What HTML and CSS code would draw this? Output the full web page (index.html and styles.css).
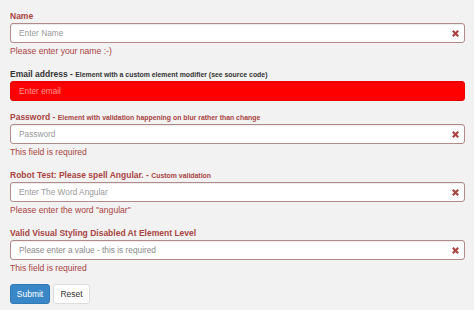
FILE: index.html
```html
<!DOCTYPE html>
<html lang="en">
<head>
  <meta charset="UTF-8">
  <title>Validation Form</title>
  <link rel="stylesheet" href="styles.css">
</head>
<body>
  <form class="form" novalidate>
    <!-- Name -->
    <div class="form-group has-error">
      <label class="control-label" for="name">Name</label>
      <div class="field">
        <input type="text" id="name" class="form-control" placeholder="Enter Name">
        <svg class="feedback" viewBox="0 0 10 10"><path d="M2 2 L8 8 M8 2 L2 8"/></svg>
      </div>
      <p class="help-block">Please enter your name :-)</p>
    </div>

    <!-- Email -->
    <div class="form-group">
      <label class="control-label dark" for="email">Email address - <small>Element with a custom element modifier (see source code)</small></label>
      <div class="field">
        <input type="email" id="email" class="form-control red" placeholder="Enter email">
      </div>
    </div>

    <!-- Password -->
    <div class="form-group has-error">
      <label class="control-label" for="password">Password - <small>Element with validation happening on blur rather than change</small></label>
      <div class="field">
        <input type="password" id="password" class="form-control" placeholder="Password">
        <svg class="feedback" viewBox="0 0 10 10"><path d="M2 2 L8 8 M8 2 L2 8"/></svg>
      </div>
      <p class="help-block">This field is required</p>
    </div>

    <!-- Robot -->
    <div class="form-group has-error">
      <label class="control-label" for="robot">Robot Test: Please spell Angular. - <small>Custom validation</small></label>
      <div class="field">
        <input type="text" id="robot" class="form-control" placeholder="Enter The Word Angular">
        <svg class="feedback" viewBox="0 0 10 10"><path d="M2 2 L8 8 M8 2 L2 8"/></svg>
      </div>
      <p class="help-block">Please enter the word "angular"</p>
    </div>

    <!-- No visual styling -->
    <div class="form-group has-error">
      <label class="control-label" for="novisual">Valid Visual Styling Disabled At Element Level</label>
      <div class="field">
        <input type="text" id="novisual" class="form-control plain" placeholder="Please enter a value - this is required">
        <svg class="feedback" viewBox="0 0 10 10"><path d="M2 2 L8 8 M8 2 L2 8"/></svg>
      </div>
      <p class="help-block">This field is required</p>
    </div>

    <div class="buttons">
      <button type="submit" class="btn btn-primary">Submit</button>
      <button type="reset" class="btn btn-default">Reset</button>
    </div>
  </form>
</body>
</html>
```

FILE: styles.css
```css
body {
  margin: 0;
  padding: 10px 9px 0 10px;
  font-family: "Liberation Sans", Arial, sans-serif;
  background-color: #f2f2f2;
  color: #333;
}

.form-group {
  margin-bottom: 10px;
}

.control-label {
  display: block;
  height: 13px;
  line-height: 12px;
  font-size: 8.5px;
  font-weight: bold;
  color: #a94442;
  white-space: nowrap;
}

.control-label.dark {
  color: #333;
}

.control-label small {
  font-size: 6.9px;
}

.field {
  position: relative;
}

.form-control {
  display: block;
  box-sizing: border-box;
  width: 100%;
  height: 20px;
  margin: 0;
  padding: 0 8px;
  font-family: inherit;
  font-size: 8.3px;
  color: #555;
  background-color: #fff;
  border: 1px solid #b28a8a;
  border-radius: 3px;
  box-shadow: inset 0 1px 1px rgba(0, 0, 0, 0.08);
}

.form-control::placeholder {
  color: #999;
}

.form-control.plain::placeholder {
  color: #8a8a8a;
}

.form-control.red {
  background-color: #ff0000;
  border-color: #ee0000;
}

.form-control.red::placeholder {
  color: #ff9a9a;
}

.feedback {
  position: absolute;
  right: 5px;
  top: 6px;
  width: 9px;
  height: 9px;
  fill: none;
  stroke: #a94442;
  stroke-width: 2.4;
}

.help-block {
  margin: 0;
  height: 15px;
  line-height: 17px;
  font-size: 8.6px;
  color: #a94442;
}

.buttons {
  display: flex;
  gap: 3px;
  margin-top: -1px;
}

.btn {
  height: 20px;
  padding: 0 4px;
  font-family: inherit;
  font-size: 8.5px;
  border-radius: 3px;
  border: 1px solid transparent;
  cursor: pointer;
}

.btn-primary {
  width: 40px;
  color: #fff;
  background-color: #3a87c8;
  border-color: #3279b5;
}

.btn-default {
  width: 37px;
  color: #333;
  background-color: #fff;
  border-color: #ddd;
}
```
